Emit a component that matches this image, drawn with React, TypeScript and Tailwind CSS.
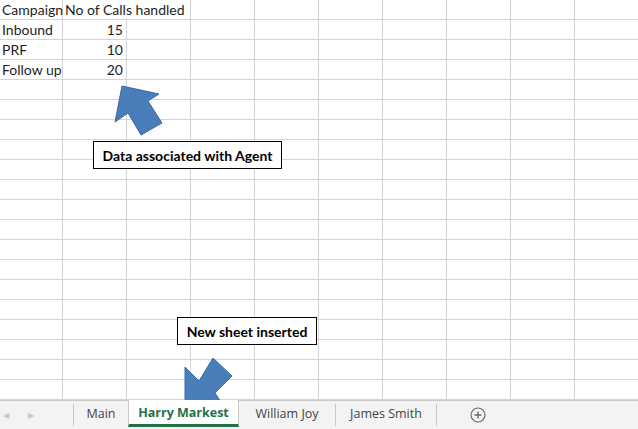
import React from "react";

const cellFont = { fontFamily: "Lato, 'Open Sans', sans-serif" };

const data: [string, string][] = [
  ["Campaign", "No of Calls handled"],
  ["Inbound", "15"],
  ["PRF", "10"],
  ["Follow up", "20"],
];

function Row({ i }: { i: number }) {
  const d = data[i];
  const cols = [];
  if (i === 0) {
    cols.push(
      <div key="a" className="w-[63px] shrink-0 h-full border-r border-[#d4d4d4] pl-[2px] text-[14px] leading-[19px] text-[#1e1e1e] whitespace-nowrap">
        {d[0]}
      </div>
    );
    cols.push(
      <div key="b" className="w-[128px] shrink-0 h-full border-r border-[#d4d4d4] pl-[2px] text-[14px] leading-[19px] text-[#1e1e1e] whitespace-nowrap">
        {d[1]}
      </div>
    );
    for (let c = 0; c < 8; c++) cols.push(<div key={c} className="w-[64px] shrink-0 h-full border-r border-[#d4d4d4]" />);
  } else {
    cols.push(
      <div key="a" className="w-[63px] shrink-0 h-full border-r border-[#d4d4d4] pl-[2px] text-[14px] leading-[19px] text-[#1e1e1e] whitespace-nowrap">
        {d ? d[0] : ""}
      </div>
    );
    cols.push(
      <div key="b" className="w-[64px] shrink-0 h-full border-r border-[#d4d4d4] pr-[3px] text-right text-[14px] leading-[19px] text-[#1e1e1e] whitespace-nowrap">
        {d ? d[1] : ""}
      </div>
    );
    for (let c = 0; c < 9; c++) cols.push(<div key={c} className="w-[64px] shrink-0 h-full border-r border-[#d4d4d4]" />);
  }
  return <div className="flex h-[20px] border-b border-[#d4d4d4] overflow-visible">{cols}</div>;
}

export default function App() {
  return (
    <div className="relative w-[638px] h-[429px] overflow-hidden bg-white flex flex-col" style={cellFont}>
      <div className="relative h-[400px] shrink-0 overflow-hidden">
        {Array.from({ length: 20 }).map((_, i) => (
          <Row key={i} i={i} />
        ))}
        <svg className="absolute left-0 top-0" width="638" height="400" viewBox="0 0 638 400">
          <polygon
            points="122,86 159,94 148,101 162,123 141,135 128,113 115,122"
            fill="#4a7ebb"
            stroke="#3a6aa5"
            strokeWidth="1"
          />
          <polygon
            points="185,405 185,367 199,381 213,358 232,376 215,393 223,405"
            fill="#4a7ebb"
            stroke="#3a6aa5"
            strokeWidth="1"
          />
        </svg>
        <div className="absolute left-[93px] top-[141px] w-[189px] h-[28px] border border-black bg-white flex items-center justify-center text-[14px] font-bold text-black">
          Data associated with Agent
        </div>
        <div className="absolute left-[177px] top-[317px] w-[140px] h-[28px] border border-black bg-white flex items-center justify-center text-[14px] font-bold text-black">
          New sheet inserted
        </div>
      </div>
      <div
        className="relative flex-1 bg-[#f3f3f3] border-t border-[#c8c8c8] flex items-stretch text-[12.5px] text-[#444]"
        style={{ fontFamily: "'Open Sans', 'Noto Sans', sans-serif" }}
      >
        <div className="w-[73px] shrink-0 flex items-center text-[#c8c8c8] text-[8px] pb-[1px]">
          <span className="ml-[3px]">◀</span>
          <span className="ml-[19px]">▶</span>
        </div>
        <div className="w-[55px] shrink-0 flex items-center justify-center border-l border-[#c8c8c8] mt-[3px] mb-[3px] pb-[2px]">
          Main
        </div>
        <div className="w-[111px] shrink-0 -mt-px bg-white border-x border-[#c8c8c8] border-b-[3px] border-b-[#217346] flex items-center justify-center font-bold text-[#217346] mb-[2px] pt-[2px]">
          Harry Markest
        </div>
        <div className="w-[97px] shrink-0 flex items-center justify-center border-r border-[#c8c8c8] mt-[3px] mb-[3px] pb-[2px]">
          William Joy
        </div>
        <div className="w-[101px] shrink-0 flex items-center justify-center border-r border-[#c8c8c8] mt-[3px] mb-[3px] pb-[2px]">
          James Smith
        </div>
        <div className="w-[82px] shrink-0 flex items-center justify-center pb-[1px]">
          <svg width="16" height="16" viewBox="0 0 16 16">
            <circle cx="8" cy="8" r="7" fill="none" stroke="#666" strokeWidth="1.1" />
            <path d="M8 4.5v7M4.5 8h7" stroke="#666" strokeWidth="1.3" />
          </svg>
        </div>
      </div>
    </div>
  );
}
